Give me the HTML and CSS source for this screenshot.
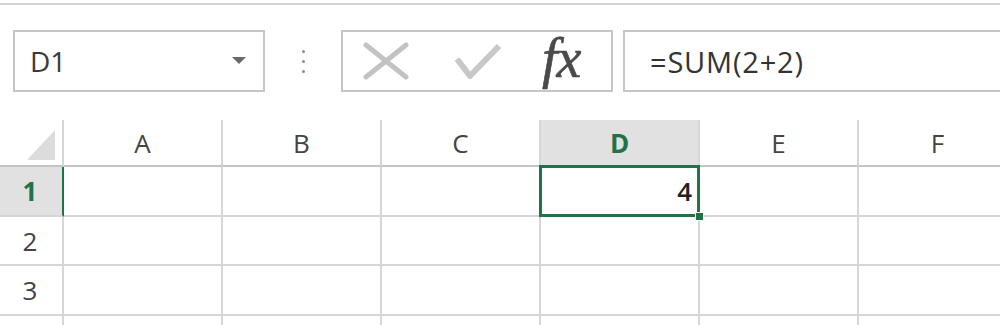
FILE: index.html
```html
<!DOCTYPE html>
<html lang="en">
  <head>
    <meta charset="UTF-8" />
    <title>Formula bar</title>
    <link rel="stylesheet" href="styles.css">
  </head>
  <body>
    <div class="app">
      <div class="ribbon-edge"></div>

      <!-- Formula bar -->
      <div class="formula-bar">
        <div class="name-box">
          <span>D1</span>
          <svg class="caret" width="14" height="8" viewBox="0 0 14 8"><path d="M0 0 H14 L7 7 Z" fill="#6a6a6a"/></svg>
        </div>
        <div class="grip">
          <span></span><span></span><span></span>
        </div>
        <div class="fx-buttons">
          <svg class="fx-icon" width="46" height="38" viewBox="0 0 46 38">
            <path d="M3 3 L43 35 M43 3 L3 35" stroke="#c3c3c3" stroke-width="5" stroke-linecap="round" fill="none"/>
          </svg>
          <svg class="fx-icon" width="48" height="36" viewBox="0 0 48 36">
            <path d="M3 16 L16 33 L45 3" stroke="#c8c8c8" stroke-width="6" stroke-linejoin="round" fill="none"/>
          </svg>
          <span class="fx-label">fx</span>
        </div>
        <div class="formula-input">=SUM(2+2)</div>
      </div>

      <!-- Sheet -->
      <div class="sheet">
        <div class="cell corner">
          <svg width="28" height="30" viewBox="0 0 28 30"><path d="M0 30 L28 0 V30 Z" fill="#dcdcdc"/></svg>
        </div>
        <div class="cell col-head">A</div>
        <div class="cell col-head">B</div>
        <div class="cell col-head">C</div>
        <div class="cell col-head active">D</div>
        <div class="cell col-head">E</div>
        <div class="cell col-head">F</div>

        <div class="cell row-head active">1</div>
        <div class="cell"></div>
        <div class="cell"></div>
        <div class="cell"></div>
        <div class="cell selected">4<span class="fill-handle"></span></div>
        <div class="cell"></div>
        <div class="cell"></div>

        <div class="cell row-head">2</div>
        <div class="cell"></div>
        <div class="cell"></div>
        <div class="cell"></div>
        <div class="cell"></div>
        <div class="cell"></div>
        <div class="cell"></div>

        <div class="cell row-head">3</div>
        <div class="cell"></div>
        <div class="cell"></div>
        <div class="cell"></div>
        <div class="cell"></div>
        <div class="cell"></div>
        <div class="cell"></div>

        <!-- row 4, only its top edge shows -->
        <div class="cell row-head"></div>
        <div class="cell"></div>
        <div class="cell"></div>
        <div class="cell"></div>
        <div class="cell"></div>
        <div class="cell"></div>
        <div class="cell"></div>
      </div>
    </div>
  </body>
</html>
```

FILE: styles.css
```css
body {
  margin: 0;
  background: #fff;
  font-family: "Open Sans", "Noto Sans", sans-serif;
  color: #333;
}

.app {
  width: 1000px;
  height: 325px;
  overflow: hidden;
}

.ribbon-edge {
  height: 3px;
  border-bottom: 2px solid #d4d4d4;
}

/* Formula bar */
.formula-bar {
  display: flex;
  align-items: stretch;
  height: 62px;
  margin-top: 25px;
}

.name-box {
  box-sizing: border-box;
  width: 252px;
  margin-left: 13px;
  padding: 0 17px 0 15px;
  border: 2px solid #c6c6c6;
  display: flex;
  align-items: center;
  justify-content: space-between;
  font-size: 28px;
  color: #3a3a3a;
}

.grip {
  width: 76px;
  display: flex;
  flex-direction: column;
  align-items: center;
  justify-content: center;
  gap: 7px;
}

.grip span {
  width: 3px;
  height: 3px;
  border-radius: 50%;
  background: #8c8c8c;
}

.fx-buttons {
  box-sizing: border-box;
  width: 272px;
  border: 2px solid #c6c6c6;
  display: flex;
  align-items: center;
  padding: 0 0 0 20px;
}

.fx-icon {
  margin-right: 45px;
}

.fx-icon + .fx-icon {
  margin-right: 40px;
}

.fx-label {
  font-family: "Liberation Serif", serif;
  font-style: italic;
  font-size: 56px;
  line-height: 1;
  color: #4a4a4a;
  margin-top: -6px;
  letter-spacing: -1px;
  -webkit-text-stroke: 0.6px #4a4a4a;
}

.formula-input {
  box-sizing: border-box;
  flex: 1;
  margin-left: 10px;
  margin-right: -10px;
  border: 2px solid #c6c6c6;
  display: flex;
  align-items: center;
  padding-left: 25px;
  font-size: 29px;
  color: #333;
  letter-spacing: 0.8px;
}

/* Sheet */
.sheet {
  margin-top: 28px;
  display: grid;
  grid-template-columns: 64px repeat(6, 159px);
  grid-template-rows: 47px 50px 49px 50px 50px;
}

.cell {
  box-sizing: border-box;
  border-right: 2px solid #d6d6d6;
  border-bottom: 2px solid #d6d6d6;
  position: relative;
  display: flex;
  align-items: center;
  justify-content: flex-end;
  padding-right: 6px;
  font-size: 26px;
  font-weight: 600;
  color: #222;
}

.corner {
  align-items: flex-end;
  padding: 0 7px 5px 0;
  border-bottom-color: #c4c4c4;
}

.col-head {
  justify-content: center;
  padding: 0;
  font-weight: 400;
  color: #444;
  border-bottom-color: #c4c4c4;
}

.row-head {
  justify-content: center;
  padding: 0 2px 0 0;
  font-weight: 400;
  color: #444;
}

.col-head.active,
.row-head.active {
  background: #e1e1e1;
  color: #217346;
  font-weight: 700;
}

.row-head.active {
  border-right-color: #217346;
}

.selected::after {
  content: "";
  position: absolute;
  top: -2px;
  left: -2px;
  right: -2px;
  bottom: -2px;
  border: 3px solid #217346;
}

.fill-handle {
  position: absolute;
  right: -6px;
  bottom: -6px;
  width: 7px;
  height: 7px;
  background: #217346;
  border: 1px solid #fff;
  z-index: 1;
}
```
